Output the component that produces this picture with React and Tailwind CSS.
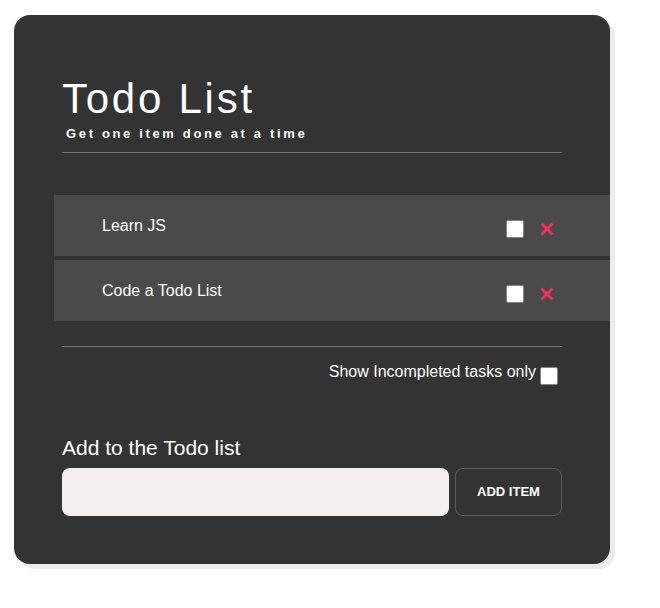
import React, { useState } from "react";

const FONT = { fontFamily: '"Liberation Sans", Arial, sans-serif' };

const initialTodos = [
  { id: 1, text: "Learn JS", done: false },
  { id: 2, text: "Code a Todo List", done: false },
];

const Box = ({ checked, onChange, className = "" }) => (
  <input
    type="checkbox"
    checked={checked}
    onChange={onChange}
    className={`h-[18px] w-[18px] shrink-0 appearance-none rounded-[2px] border border-[#858585] bg-white ${className}`}
  />
);

const CrossIcon = () => (
  <svg width="14" height="14" viewBox="0 0 14 14" fill="none">
    <path
      d="M1.5 1.5L12.5 12.5M12.5 1.5L1.5 12.5"
      stroke="#f3315e"
      strokeWidth="2.8"
      strokeLinecap="butt"
    />
  </svg>
);

const App = () => {
  const [todos, setTodos] = useState(initialTodos);
  const [onlyOpen, setOnlyOpen] = useState(false);
  const [draft, setDraft] = useState("");

  const toggle = (id) =>
    setTodos(todos.map((t) => (t.id === id ? { ...t, done: !t.done } : t)));
  const remove = (id) => setTodos(todos.filter((t) => t.id !== id));
  const addItem = () => {
    if (!draft.trim()) return;
    setTodos([...todos, { id: Date.now(), text: draft.trim(), done: false }]);
    setDraft("");
  };

  const visible = onlyOpen ? todos.filter((t) => !t.done) : todos;

  return (
    <div className="min-h-screen bg-white pl-[14px] pt-[15px]" style={FONT}>
      <div className="w-[596px] rounded-[16px] bg-[#333333] px-[48px] pb-[48px] pt-[60px] text-white shadow-[5px_5px_0_#ececec]">
        <h1 className="text-[42px] leading-[48px] font-normal tracking-[2.75px]">
          Todo List
        </h1>
        <p className="mt-[3px] pl-[4px] text-[13px] leading-[16px] font-bold tracking-[2.65px]">
          Get one item done at a time
        </p>
        <div className="mt-[10px] h-px bg-[#737373]" />

        <ul className="mr-[-48px] ml-[-8px] mt-[42px] flex flex-col gap-[4px]">
          {visible.map((t) => (
            <li
              key={t.id}
              className="flex h-[61px] items-center bg-[#4a4a4a] pl-[48px] pr-[56px]"
            >
              <span className="flex-1 text-[16px] leading-[20px]">{t.text}</span>
              <div className="mt-[7px] flex items-center gap-[16px]">
                <Box checked={t.done} onChange={() => toggle(t.id)} />
                <button onClick={() => remove(t.id)} className="flex">
                  <CrossIcon />
                </button>
              </div>
            </li>
          ))}
        </ul>

        <div className="mt-[25px] h-px bg-[#737373]" />

        <label className="mt-[15px] flex items-start justify-end gap-[4px] pr-[4px]">
          <span className="text-[16px] leading-[20px]">
            Show Incompleted tasks only
          </span>
          <Box
            checked={onlyOpen}
            onChange={() => setOnlyOpen(!onlyOpen)}
            className="mt-[5px]"
          />
        </label>

        <h2 className="mt-[50px] text-[21px] leading-[25px] font-normal">
          Add to the Todo list
        </h2>
        <div className="mt-[8px] flex gap-[6px]">
          <input
            value={draft}
            onChange={(e) => setDraft(e.target.value)}
            className="h-[48px] flex-1 rounded-[8px] bg-[#f5efef] px-3 text-[16px] text-[#333] outline-none"
          />
          <button
            onClick={addItem}
            className="h-[48px] w-[107px] rounded-[8px] border border-[#5c5c5c] text-[13px] font-bold text-white"
          >
            ADD ITEM
          </button>
        </div>
      </div>
    </div>
  );
};

export default App;
